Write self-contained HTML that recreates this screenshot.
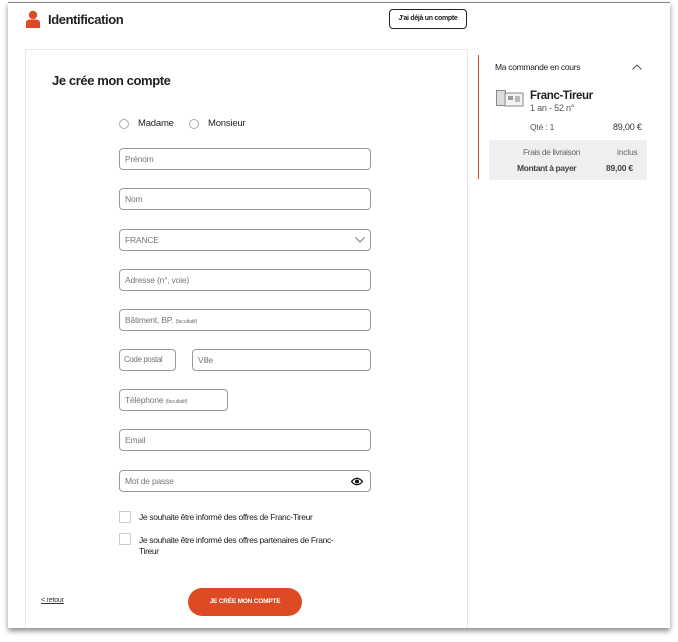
<!DOCTYPE html>
<html><head><meta charset="utf-8"><style>
*{box-sizing:border-box;margin:0;padding:0}
body{width:678px;height:642px;background:#fff;font-family:"Liberation Sans",sans-serif;color:#222;position:relative;overflow:hidden;letter-spacing:-0.2px}
.page{position:absolute;left:8px;top:2px;width:662px;height:626px;background:#fff;border-top:1px solid #888;box-shadow:0 3px 5px rgba(0,0,0,.45);overflow:hidden}
.abs{position:absolute;white-space:nowrap}
.inp{position:absolute;border:1px solid #999;border-radius:4px;height:22px;font-size:8.5px;color:#777;padding:5px 5px;background:#fff;white-space:nowrap;overflow:hidden}
.lbl{font-size:8.5px}
</style></head><body>
<div class="page"></div>
<svg class="abs" style="left:25px;top:10px" width="16" height="18" viewBox="0 0 16 18"><circle cx="8" cy="5" r="4.2" fill="#dd4b25"/><path d="M1 18 V13 Q1 9.5 5 9.5 H11 Q15 9.5 15 13 V18 Z" fill="#dd4b25"/></svg>
<div class="abs" style="left:48px;top:12px;font-size:13px;font-weight:bold;color:#222;letter-spacing:-0.4px">Identification</div>
<div class="abs" style="left:389px;top:9px;width:78px;height:20px;border:1px solid #222;border-radius:4px;font-size:7px;font-weight:bold;text-align:center;line-height:18px;letter-spacing:-0.3px">J'ai déjà un compte</div>
<div class="abs" style="left:25px;top:49px;width:443px;height:579px;border:1px solid #e8e8e8;border-bottom:none"></div>
<div class="abs" style="left:52px;top:73px;font-size:13px;font-weight:bold;letter-spacing:-0.4px">Je crée mon compte</div>
<div class="abs" style="left:119px;top:119px;width:10px;height:10px;border:1px solid #aaa;border-radius:50%"></div>
<div class="abs lbl" style="left:138px;top:118px;font-size:9.5px">Madame</div>
<div class="abs" style="left:189px;top:119px;width:10px;height:10px;border:1px solid #aaa;border-radius:50%"></div>
<div class="abs lbl" style="left:208px;top:118px;font-size:9.5px">Monsieur</div>
<div class="inp" style="left:119px;top:148px;width:252px">Prénom</div>
<div class="inp" style="left:119px;top:188px;width:252px">Nom</div>
<div class="inp" style="left:119px;top:229px;width:252px">FRANCE<svg class="abs" style="right:5px;top:7px" width="10" height="6" viewBox="0 0 10 6"><path d="M0.5 0.5 L5 5 L9.5 0.5" fill="none" stroke="#777"/></svg></div>
<div class="inp" style="left:119px;top:269px;width:252px">Adresse (n°, voie)</div>
<div class="inp" style="left:119px;top:309px;width:252px">Bâtiment, BP. <span style="font-size:5.5px">(facultatif)</span></div>
<div class="inp" style="left:119px;top:349px;width:57px;font-size:8px;letter-spacing:-0.4px;padding-left:4px">Code postal</div>
<div class="inp" style="left:192px;top:349px;width:179px">Ville</div>
<div class="inp" style="left:119px;top:389px;width:109px">Téléphone <span style="font-size:5.5px">(facultatif)</span></div>
<div class="inp" style="left:119px;top:429px;width:252px">Email</div>
<div class="inp" style="left:119px;top:470px;width:252px">Mot de passe<svg class="abs" style="right:7px;top:6px" width="12" height="9" viewBox="0 0 12 9"><path d="M0.5 4.5 Q6 -2 11.5 4.5 Q6 11 0.5 4.5Z" fill="none" stroke="#111" stroke-width="1.3"/><circle cx="6" cy="4.5" r="2" fill="#111"/></svg></div>
<div class="abs" style="left:119px;top:511px;width:12px;height:12px;border:1px solid #ccc"></div>
<div class="abs lbl" style="left:139px;top:512px;letter-spacing:-0.35px">Je souhaite être informé des offres de Franc-Tireur</div>
<div class="abs" style="left:119px;top:533px;width:12px;height:12px;border:1px solid #ccc"></div>
<div class="abs lbl" style="left:139px;top:535px;width:200px;line-height:11px;white-space:normal;letter-spacing:-0.35px">Je souhaite être informé des offres partenaires de Franc-<br>Tireur</div>
<div class="abs" style="left:41px;top:597px;font-size:7px;text-decoration:underline;color:#333">&lt; retour</div>
<div class="abs" style="left:188px;top:588px;width:114px;height:28px;background:#dd4b25;border-radius:14px;color:#fff;font-size:6.5px;font-weight:bold;text-align:center;line-height:28px">JE CRÉE MON COMPTE</div>
<div class="abs" style="left:478px;top:55px;width:1px;height:124px;background:#dd4b25"></div>
<div class="abs lbl" style="left:495px;top:62px;letter-spacing:-0.3px">Ma commande en cours</div>
<svg class="abs" style="left:632px;top:64px" width="10" height="6" viewBox="0 0 10 6"><path d="M0.5 5.5 L5 1 L9.5 5.5" fill="none" stroke="#555"/></svg>
<svg class="abs" style="left:496px;top:90px" width="28" height="18" viewBox="0 0 28 18"><rect x="0.5" y="0.5" width="9" height="15" fill="#ddd" stroke="#888"/><rect x="9" y="3" width="18" height="13" fill="#f2f2f2" stroke="#888"/><rect x="12" y="6" width="5" height="4" fill="#999"/><rect x="19" y="6" width="5" height="6" fill="#bbb"/></svg>
<div class="abs" style="left:530px;top:90px;font-size:11.5px;font-weight:bold;letter-spacing:-0.4px">Franc-Tireur</div>
<div class="abs lbl" style="left:530px;top:103px;color:#555;font-size:9px">1 an - 52 n°</div>
<div class="abs lbl" style="left:530px;top:122px;color:#555">Qté : 1</div>
<div class="abs lbl" style="left:613px;top:122px;color:#333;font-size:9px">89,00 €</div>
<div class="abs" style="left:489px;top:140px;width:158px;height:40px;background:#efefef"></div>
<div class="abs lbl" style="left:523px;top:147px;color:#666;letter-spacing:-0.4px">Frais de livraison</div>
<div class="abs lbl" style="left:617px;top:147px;color:#666">inclus</div>
<div class="abs lbl" style="left:517px;top:163px;font-weight:bold;color:#444;letter-spacing:-0.4px">Montant à payer</div>
<div class="abs lbl" style="left:606px;top:163px;font-weight:bold;color:#444">89,00 €</div>
</body></html>
